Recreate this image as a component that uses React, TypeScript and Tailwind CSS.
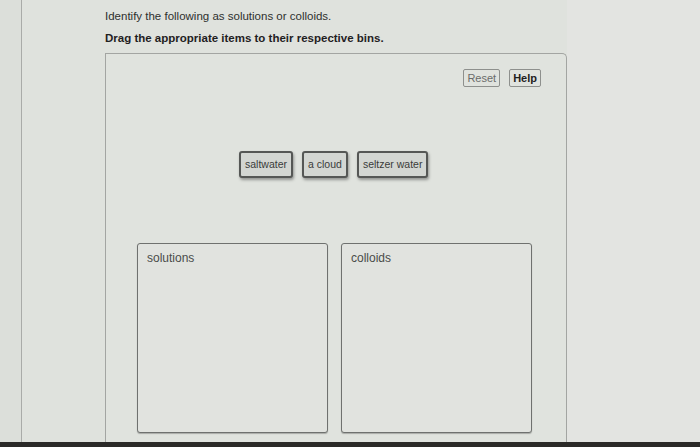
const items = ["saltwater", "a cloud", "seltzer water"];

function Bin({ label }: { label: string }) {
  return (
    <div className="h-[190px] w-[191px] rounded-[3px] border border-[#6f716f] bg-[#e1e3df] px-[9px] pt-[1px] shadow-[0_1px_1px_rgba(0,0,0,0.25)]">
      <span className="text-[12px] text-[#4a4c4a]">{label}</span>
    </div>
  );
}

export default function App() {
  return (
    <div
      className="flex h-[447px] w-[700px] flex-col overflow-hidden bg-[#dfe2dd]"
      style={{ fontFamily: '"Liberation Sans", Arial, sans-serif' }}
    >
      <div className="flex flex-1">
        {/* left gutter */}
        <div className="w-[22px] border-r border-[#a9aba8] bg-[#dcdfda]" />

        {/* question area */}
        <div className="flex w-[545px] flex-col pl-[83px] pt-[8px]">
          <p className="text-[11.5px] text-[#2e302e]">Identify the following as solutions or colloids.</p>
          <p className="mt-[5px] text-[11.5px] font-bold text-[#1f211f]">
            Drag the appropriate items to their respective bins.
          </p>

          <div className="mt-[5px] flex-1 rounded-tr-[5px] border-l border-r border-t border-[#a3a5a2] bg-[#e0e3de]">
            <div className="flex justify-end gap-[9px] pr-[25px] pt-[15px]">
              <button className="rounded-[2px] border border-[#8e908d] px-[3px] py-0 text-[11px] leading-[16px] text-[#6a6c6a]">
                Reset
              </button>
              <button className="rounded-[2px] border border-[#8e908d] px-[3px] py-0 text-[11px] leading-[16px] font-bold text-[#1f211f]">
                Help
              </button>
            </div>

            <div className="mt-[64px] flex gap-[9px] pl-[133px]">
              {items.map((it) => (
                <div
                  key={it}
                  className="rounded-[3px] border-2 border-[#555755] bg-[#d3d6d2] px-[4px] py-[4px] text-[10.5px] text-[#3a3c3a] shadow-[1px_2px_3px_rgba(0,0,0,0.35)]"
                >
                  {it}
                </div>
              ))}
            </div>

            <div className="mt-[65px] flex gap-[13px] pl-[31px]">
              <Bin label="solutions" />
              <Bin label="colloids" />
            </div>
          </div>
        </div>

        {/* right area */}
        <div className="flex-1 bg-[#e3e4e1]" />
      </div>
      <div className="h-[5px] bg-[#2b2a28]" />
    </div>
  );
}
